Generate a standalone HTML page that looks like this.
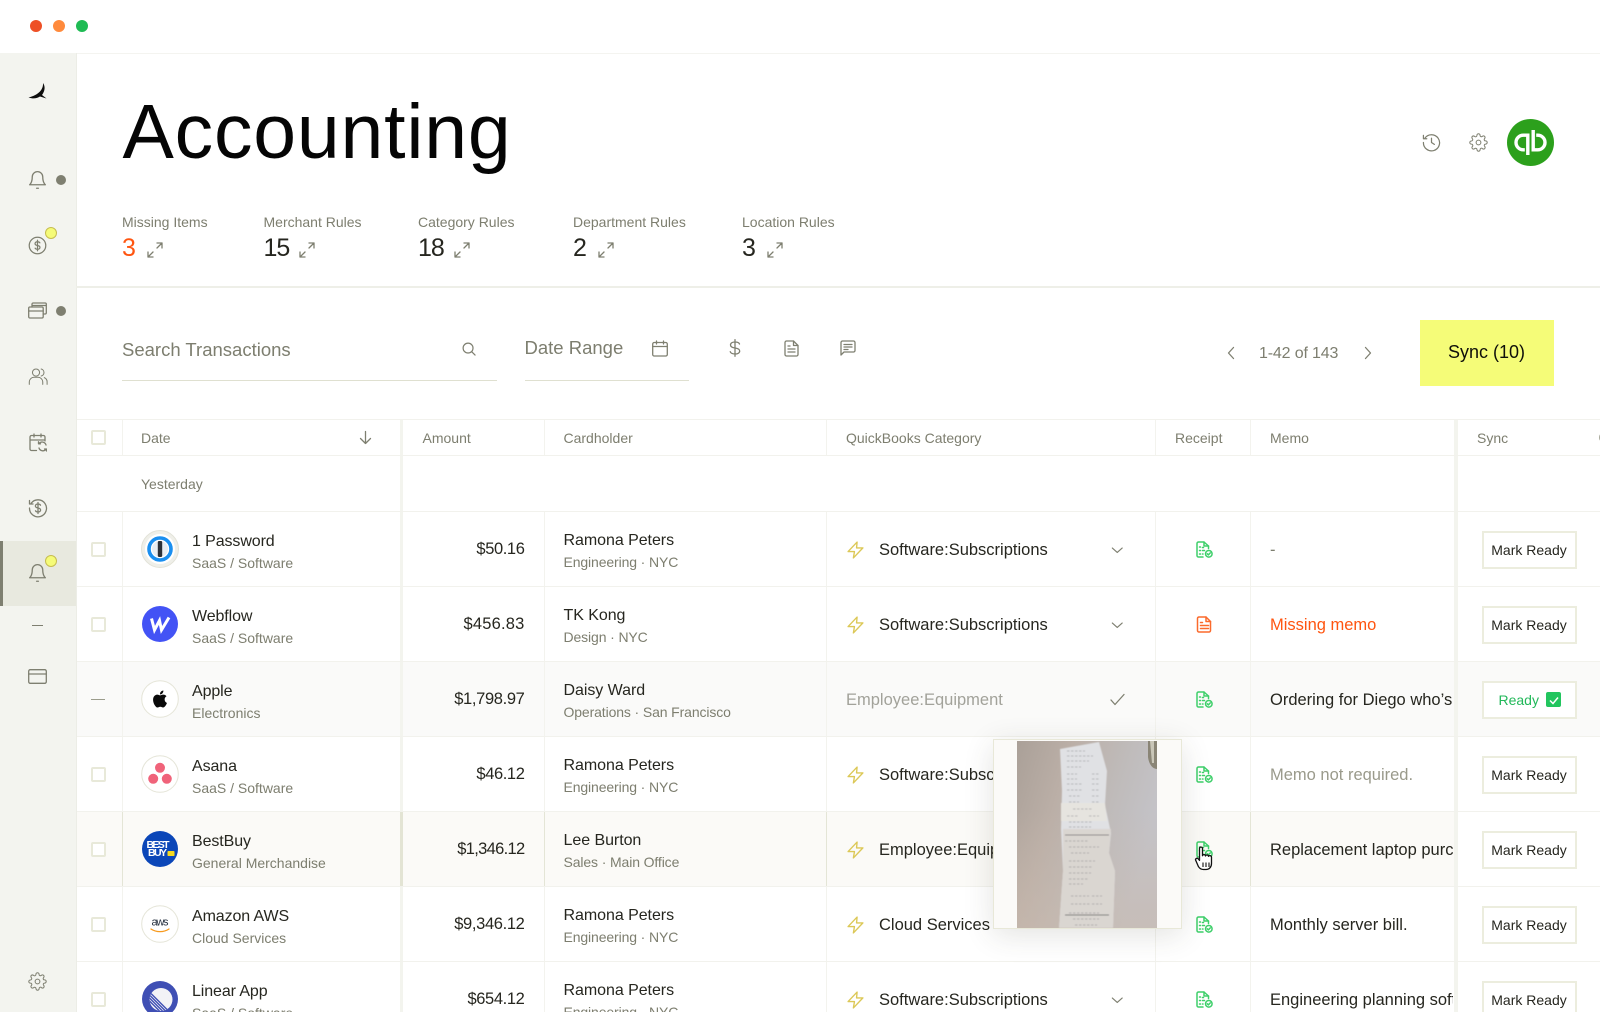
<!DOCTYPE html>
<html lang="en"><head><meta charset="utf-8"><title>Accounting</title>
<style>
*{box-sizing:border-box;margin:0;padding:0}
html,body{width:1600px;height:1014px;background:#fff;overflow:hidden}
body{font-family:"Liberation Sans",sans-serif;color:#26261f;position:relative}
.abs,#app div,#app span,#app svg{position:absolute}
#app{position:absolute;left:0;top:0;width:1600px;height:1012px;overflow:hidden;background:#fff}
.t{white-space:nowrap}
.ic{fill:none;stroke:#7e7f70;stroke-width:1.3;stroke-linecap:round;stroke-linejoin:round}
.dot{width:10px;height:10px;border-radius:50%;background:#7e7f70}
.yd{width:12px;height:12px;border-radius:50%;background:#f5fb78;border:1.2px solid #c6bd50}
.lb{font-size:14px;line-height:20px;color:#7d7e6f;white-space:nowrap}
.vl{font-size:25px;line-height:30px;letter-spacing:-1px;color:#26261f;white-space:nowrap}
.h{left:76px;width:1524px;height:1px;background:#f2f2ed}
.v{width:1px;top:420px;height:592px;background:#f3f3ee}
.th{top:428px;font-size:14px;line-height:20px;color:#7d7e6f;white-space:nowrap}
.r{left:0;width:1600px;height:75px}
.ck{left:91px;top:30px;width:15px;height:15px;border:2px solid #e8e9d9;border-radius:2px;background:#fff}
.lg{left:141px;top:18px;width:38px;height:38px}
.n{left:192px;top:20px;font-size:16px;line-height:20px;letter-spacing:-.1px;white-space:nowrap}
.s{left:192px;top:41px;font-size:14px;line-height:20px;color:#7d7e6f;white-space:nowrap}
.a{left:400px;width:124.5px;top:27px;font-size:16.5px;line-height:20px;text-align:right;white-space:nowrap}
.cn{left:563.5px;top:19px;font-size:16px;line-height:20px;letter-spacing:-.05px;white-space:nowrap}
.cs{left:563.5px;top:40px;font-size:14px;line-height:20px;color:#7d7e6f;letter-spacing:-.12px;white-space:nowrap}
.b{left:847px;top:29px;width:17px;height:18px;fill:none;stroke:#dcc857;stroke-width:1.3;stroke-linejoin:round}
.c{left:879px;top:28px;font-size:16.5px;line-height:20px;white-space:nowrap}
.ch{left:1111px;top:31.5px;width:12.5px;height:12.5px;fill:none;stroke:#7e7f70;stroke-width:1.3;stroke-linecap:round;stroke-linejoin:round}
.d{left:1196px;top:28.5px;width:17px;height:17px;fill:none;stroke:#3ecf6a;stroke-width:1.5;stroke-linecap:round;stroke-linejoin:round}
.m{left:1270px;top:28px;width:183px;overflow:hidden;font-size:16.5px;line-height:20px;white-space:nowrap}
.btn{left:1481.5px;top:19px;width:95px;height:38px;border:2px solid #ecedde;background:#fff;font-size:14px;line-height:35px;text-align:center;white-space:nowrap;color:#26261f}
</style></head><body>
<svg width="0" height="0" style="position:absolute">
<defs>
<symbol id="exp" viewBox="0 0 16 16"><path d="M10 6 15 1M10 1h5v5M6 10l-5 5M1 10v5h5"/></symbol>
<symbol id="bell" viewBox="0 0 24 24"><path d="M18 9a6 6 0 0 0-12 0c0 7-3 9-3 9h18s-3-2-3-9"/><path d="M11 22h2"/></symbol>
<symbol id="gear" viewBox="0 0 24 24"><circle cx="12" cy="12" r="3"/><path d="M19.4 15a1.65 1.65 0 0 0 .33 1.82l.06.06a2 2 0 0 1 0 2.83 2 2 0 0 1-2.83 0l-.06-.06a1.65 1.65 0 0 0-1.82-.33 1.65 1.65 0 0 0-1 1.51V21a2 2 0 0 1-2 2 2 2 0 0 1-2-2v-.09A1.65 1.65 0 0 0 9 19.4a1.65 1.65 0 0 0-1.82.33l-.06.06a2 2 0 0 1-2.83 0 2 2 0 0 1 0-2.83l.06-.06a1.65 1.65 0 0 0 .33-1.82 1.65 1.65 0 0 0-1.51-1H3a2 2 0 0 1-2-2 2 2 0 0 1 2-2h.09A1.65 1.65 0 0 0 4.6 9a1.65 1.65 0 0 0-.33-1.82l-.06-.06a2 2 0 0 1 0-2.83 2 2 0 0 1 2.83 0l.06.06a1.65 1.65 0 0 0 1.82.33H9a1.65 1.65 0 0 0 1-1.51V3a2 2 0 0 1 2-2 2 2 0 0 1 2 2v.09a1.65 1.65 0 0 0 1 1.51 1.65 1.65 0 0 0 1.82-.33l.06-.06a2 2 0 0 1 2.83 0 2 2 0 0 1 0 2.83l-.06.06a1.65 1.65 0 0 0-.33 1.82V9a1.65 1.65 0 0 0 1.51 1H21a2 2 0 0 1 2 2 2 2 0 0 1-2 2h-.09a1.65 1.65 0 0 0-1.51 1z"/></symbol>
<symbol id="bolt" viewBox="0 0 16 17"><path d="M9.500 1 1 10h6l-1 6 9-9.500H9z"/></symbol>
<symbol id="dn" viewBox="0 0 14 14"><path d="M1.500 4.500 7 9.500l5.500-5"/></symbol>
<symbol id="rc" viewBox="0 0 17 17"><path d="M7 16H2.500A1.500 1.500 0 0 1 1 14.500v-12A1.500 1.500 0 0 1 2.500 1H8l4.500 4v2.500"/><path d="M8 1v4h4.500"/><path d="M3.500 6h1M3.500 9.500h1M3.500 13h1M6.500 6.500h1M6.500 9.500h2M6.500 13h.5"/><circle cx="12.800" cy="12.800" r="3.300"/><path d="M11.300 12.800l1.100 1.100 1.900-2"/></symbol>
</defs></svg>
<div id="app">
<!-- titlebar -->
<div style="left:30px;top:20px;width:12px;height:12px;border-radius:50%;background:#ee5026"></div>
<div style="left:53px;top:20px;width:12px;height:12px;border-radius:50%;background:#ff8a3c"></div>
<div style="left:76px;top:20px;width:12px;height:12px;border-radius:50%;background:#1fbb54"></div>
<div style="left:0;top:52.500px;width:1600px;height:1px;background:#f4f4f0"></div>

<!-- table backgrounds -->
<div style="left:76px;top:662px;width:1524px;height:75px;background:#fafaf9"></div>
<div style="left:76px;top:812px;width:1378px;height:75px;background:#fbfaf7"></div>
<div class="v" style="left:122px"></div><div class="v" style="left:544px"></div><div class="v" style="left:826px"></div><div class="v" style="left:1155px"></div><div class="v" style="left:1250px"></div>
<div style="left:76px;top:456px;width:1524px;height:55px;background:#fff"></div>
<div style="left:399.500px;top:420px;width:3.500px;height:592px;background:#f3f4ee"></div>
<div style="left:1454px;top:420px;width:4px;height:592px;background:#f3f4ee"></div>
<div style="left:122px;top:812px;width:1px;height:75px;background:#e4e5d6"></div>
<div style="left:399.500px;top:812px;width:3.500px;height:75px;background:#e3e4d4"></div>
<div style="left:544px;top:812px;width:1px;height:75px;background:#e4e5d6"></div>
<div style="left:826px;top:812px;width:1px;height:75px;background:#e4e5d6"></div>
<div style="left:1250px;top:812px;width:1px;height:75px;background:#e4e5d6"></div>
<div class="h" style="top:419px"></div><div class="h" style="top:455px"></div><div class="h" style="top:511px"></div><div class="h" style="top:586px"></div><div class="h" style="top:661px"></div><div class="h" style="top:736px"></div><div class="h" style="top:811px"></div><div class="h" style="top:886px"></div><div class="h" style="top:961px"></div>

<!-- sidebar -->
<div style="left:0;top:53px;width:77px;height:960px;background:#f3f4ef;border-right:1.500px solid #ecede6"></div>
<svg style="left:28px;top:82px" width="20" height="18" viewBox="0 0 20 18"><path fill="#0d0d0d" d="M15 1C15.500 7 11 13 .5 15.500 5 17 9 16.500 12 14.500L18.500 16.500 14 13C17 9 17.500 4.500 15 1Z"/></svg>
<svg class="ic" style="left:27px;top:168.500px;stroke-width:1.500" width="21" height="21"><use href="#bell"/></svg>
<div class="dot" style="left:56px;top:175px"></div>
<svg class="ic" style="left:28px;top:236px" width="19" height="19" viewBox="0 0 20 20"><circle cx="10" cy="10" r="8.700"/><path d="M12.500 7.200C12.200 6.500 11.200 6 10 6c-1.500 0-2.600.8-2.600 2s1.100 1.700 2.600 2 2.600.8 2.600 2-1.100 2-2.600 2c-1.200 0-2.200-.5-2.500-1.200M10 4.500v11"/></svg>
<div class="yd" style="left:44.500px;top:226.500px"></div>
<svg class="ic" style="left:28px;top:302px" width="19" height="17" viewBox="0 0 19 17"><rect x=".7" y="5" width="14.500" height="11" rx="1.200"/><path d="M.7 9h14.500M4 5V2.200C4 1.500 4.500 1 5.200 1h12c.7 0 1.100.5 1.100 1.200v8.600c0 .7-.4 1.200-1.100 1.200h-2M4 3.500h14"/></svg>
<div class="dot" style="left:56px;top:306px"></div>
<svg class="ic" style="left:27.500px;top:367px" width="20" height="19" viewBox="0 0 24 24"><circle cx="9.500" cy="7" r="4.500"/><path d="M1 22v-3a6 6 0 0 1 6-6h5a6 6 0 0 1 6 6v3M16 2.600a4.500 4.500 0 0 1 0 8.800M20 13.400a6 6 0 0 1 3.500 5.600v3"/></svg>
<svg class="ic" style="left:28.500px;top:433px" width="18" height="19" viewBox="0 0 18 19"><path d="M7.500 17.500H2.500A1.500 1.500 0 0 1 1 16V4a1.500 1.500 0 0 1 1.500-1.500h12A1.500 1.500 0 0 1 16 4v4M1 7h15M5 1v3M12 1v3"/><path d="M17 12a4 4 0 0 0-7-1.500M9.500 8.800v2h2M10 15a4 4 0 0 0 7 1.200M17.500 18v-2h-2"/></svg>
<svg class="ic" style="left:28px;top:498px" width="20" height="20" viewBox="0 0 20 20"><path d="M3.200 5.200A8.500 8.500 0 1 1 1.500 10M1.500 2.500v3.500H5"/><path d="M12.500 7.200c-.3-.7-1.300-1.200-2.500-1.200-1.500 0-2.600.8-2.600 2s1.100 1.700 2.600 2 2.600.8 2.600 2-1.100 2-2.600 2c-1.200 0-2.200-.5-2.500-1.200M10 4.500v11"/></svg>
<div style="left:0;top:541px;width:76px;height:65px;background:#e8e9df"></div>
<div style="left:0;top:541px;width:2.500px;height:65px;background:#7e7f70"></div>
<svg class="ic" style="left:27px;top:561.500px;stroke-width:1.500" width="21" height="21"><use href="#bell"/></svg>
<div class="yd" style="left:44.500px;top:554.500px"></div>
<div style="left:32px;top:624.500px;width:11px;height:1.300px;background:#7e7f70"></div>
<svg class="ic" style="left:28px;top:669px" width="19" height="15" viewBox="0 0 19 15"><rect x=".7" y=".7" width="17.600" height="13.600" rx="1.500"/><path d="M.7 5h17.600"/></svg>
<svg class="ic" style="left:28px;top:972px" width="19" height="19"><use href="#gear"/></svg>

<!-- header -->
<div class="t" style="left:122.500px;top:86px;font-size:77px;line-height:92px;letter-spacing:.8px;color:#050505">Accounting</div>
<svg class="ic" style="left:1422px;top:133px" width="19" height="19" viewBox="0 0 20 20"><path d="M3.200 5.200A8.500 8.500 0 1 1 1.500 10M1.500 2.500v3.500H5M10 5.500V10l3 2"/></svg>
<svg class="ic" style="left:1469px;top:133px" width="19" height="19"><use href="#gear"/></svg>
<svg style="left:1506.500px;top:119px" width="47" height="47" viewBox="0 0 47 47"><circle cx="23.500" cy="23.500" r="23.500" fill="#2ca01c"/><path fill="none" stroke="#fff" stroke-width="3.400" d="M20.800 16.200h-4.500a7.300 7.300 0 0 0 0 14.600h1.500M20.800 14.500V36M26.200 11V32.500M26.200 30.800h4.500a7.300 7.300 0 0 0 0-14.600h-1.500"/></svg>

<div class="lb" style="left:122px;top:212px">Missing Items</div>
<div class="vl" style="left:122px;top:233px;color:#ff5510">3</div>
<svg class="ic" style="left:147px;top:242px" width="16" height="16"><use href="#exp"/></svg>
<div class="lb" style="left:263.500px;top:212px">Merchant Rules</div>
<div class="vl" style="left:263.500px;top:233px">15</div>
<svg class="ic" style="left:299px;top:242px" width="16" height="16"><use href="#exp"/></svg>
<div class="lb" style="left:418px;top:212px">Category Rules</div>
<div class="vl" style="left:418px;top:233px">18</div>
<svg class="ic" style="left:454px;top:242px" width="16" height="16"><use href="#exp"/></svg>
<div class="lb" style="left:573px;top:212px">Department Rules</div>
<div class="vl" style="left:573px;top:233px">2</div>
<svg class="ic" style="left:598px;top:242px" width="16" height="16"><use href="#exp"/></svg>
<div class="lb" style="left:742px;top:212px">Location Rules</div>
<div class="vl" style="left:742px;top:233px">3</div>
<svg class="ic" style="left:767px;top:242px" width="16" height="16"><use href="#exp"/></svg>
<div style="left:76px;top:286px;width:1524px;height:1.500px;background:#eeefe8"></div>

<!-- toolbar -->
<div class="t" style="left:122px;top:338px;font-size:18.500px;line-height:24px;color:#7d7e6f">Search Transactions</div>
<svg class="ic" style="left:462px;top:341.500px" width="14" height="14" viewBox="0 0 15 15"><circle cx="6.500" cy="6.500" r="5.300"/><path d="m10.500 10.500 3.500 3.500"/></svg>
<div style="left:122px;top:380px;width:375px;height:1.300px;background:#dfe0d0"></div>
<div class="t" style="left:524.500px;top:336px;font-size:18.500px;line-height:24px;color:#7d7e6f">Date Range</div>
<svg class="ic" style="left:652px;top:339.500px" width="16" height="17" viewBox="0 0 16 17"><rect x=".7" y="2.500" width="14.600" height="13.500" rx="1.500"/><path d="M.7 6.500h14.600M4.500 1v3M11.500 1v3"/></svg>
<div style="left:524.500px;top:380px;width:164px;height:1.300px;background:#dfe0d0"></div>
<svg class="ic" style="left:729px;top:339px" width="12" height="18" viewBox="0 0 12 18"><path d="M10.500 5C10 3.500 8.200 3 6 3 3.300 3 1.500 4.200 1.500 6S3.300 8.600 6 9s4.700 1.200 4.700 3-1.800 3-4.700 3c-2.400 0-4.200-.7-4.800-2.300M6 .7v16.600"/></svg>
<svg class="ic" style="left:784px;top:340px" width="15" height="17" viewBox="0 0 15 17"><path d="M9.500 1H2.500A1.500 1.500 0 0 0 1 2.500v12A1.500 1.500 0 0 0 2.500 16h10a1.500 1.500 0 0 0 1.500-1.500V5.500z"/><path d="M9.500 1v4.500H14M4 6h2M4 9h7M4 12h7"/></svg>
<svg class="ic" style="left:839.500px;top:340px" width="16" height="16" viewBox="0 0 16 16"><path d="M1 15V2.500A1.500 1.500 0 0 1 2.500 1h11A1.500 1.500 0 0 1 15 2.500v8a1.500 1.500 0 0 1-1.500 1.500H4z"/><path d="M4 4.500h8M4 7h8M4 9.500h4"/></svg>
<svg class="ic" style="left:1226px;top:346px" width="10" height="14" viewBox="0 0 10 14"><path d="M7.500 1.500 2.500 7l5 5.500"/></svg>
<div class="t" style="left:1259px;top:344px;font-size:16px;line-height:20px;letter-spacing:-.15px;color:#7d7e6f">1-42 of 143</div>
<svg class="ic" style="left:1362.500px;top:346px" width="10" height="14" viewBox="0 0 10 14"><path d="M2.500 1.500 7.500 7l-5 5.500"/></svg>
<div style="left:1419.500px;top:320px;width:134px;height:66px;background:#f5fc78;font-size:18px;line-height:64px;text-align:center;color:#0f0f0a">Sync (10)</div>

<!-- table head -->
<div class="ck" style="top:430px"></div>
<div class="th" style="left:141px">Date</div>
<svg class="ic" style="left:358px;top:430px" width="15" height="15" viewBox="0 0 15 15"><path d="M7.500 1.500v12M2.500 8.500l5 5 5-5"/></svg>
<div class="th" style="left:422.500px">Amount</div>
<div class="th" style="left:563.500px">Cardholder</div>
<div class="th" style="left:846px">QuickBooks Category</div>
<div class="th" style="left:1175px">Receipt</div>
<div class="th" style="left:1270px">Memo</div>
<div class="th" style="left:1477px">Sync</div>
<div style="left:1598.500px;top:434px;width:4px;height:7px;border:1px solid #a9aa9c;border-radius:50%"></div>
<div class="t" style="left:141px;top:474px;font-size:14px;line-height:20px;color:#7d7e6f">Yesterday</div>

<!-- row 1 -->
<div class="r" style="top:512px">
<div class="ck"></div>
<svg class="lg" viewBox="0 0 38 38"><circle cx="19" cy="19" r="18.500" fill="#efefe9" stroke="#e2e2d8"/><circle cx="19" cy="19" r="15" fill="#fff"/><circle cx="19" cy="19" r="11" fill="#fff" stroke="#1a8ff0" stroke-width="3.600"/><circle cx="19" cy="19" r="8" fill="#e8edf2"/><rect x="16.800" y="11" width="4.400" height="16" rx="1.200" fill="#2c3138"/></svg>
<div class="n">1 Password</div><div class="s">SaaS / Software</div>
<div class="a" style="letter-spacing:-.4px">$50.16</div>
<div class="cn">Ramona Peters</div><div class="cs">Engineering · NYC</div>
<svg class="b"><use href="#bolt"/></svg><div class="c">Software:Subscriptions</div>
<svg class="ch"><use href="#dn"/></svg>
<svg class="d"><use href="#rc"/></svg>
<div class="m" style="color:#7d7e6f">-</div>
<div class="btn">Mark Ready</div>
</div>
<!-- row 2 -->
<div class="r" style="top:587px">
<div class="ck"></div>
<svg class="lg" viewBox="0 0 38 38"><circle cx="19" cy="19" r="18" fill="#4353f5"/><path d="M10.500 13.500 13.500 25 18.500 15.500 20.500 25 28 12.500" fill="none" stroke="#fff" stroke-width="3" stroke-linejoin="miter"/></svg>
<div class="n">Webflow</div><div class="s">SaaS / Software</div>
<div class="a" style="letter-spacing:.2px">$456.83</div>
<div class="cn">TK Kong</div><div class="cs">Design · NYC</div>
<svg class="b"><use href="#bolt"/></svg><div class="c">Software:Subscriptions</div>
<svg class="ch"><use href="#dn"/></svg>
<svg class="d" style="stroke:#fb6a2c" viewBox="0 0 17 17"><path d="M10 1H3A1.500 1.500 0 0 0 1.500 2.500v12A1.500 1.500 0 0 0 3 16h10a1.500 1.500 0 0 0 1.500-1.500V5.500z"/><path d="M10 1v4.500h4.500M4.500 6.500h2M4.500 9.500h8M4.500 12.500h8"/></svg>
<div class="m" style="color:#ff5510">Missing memo</div>
<div class="btn">Mark Ready</div>
</div>
<!-- row 3 -->
<div class="r" style="top:662px">
<div style="left:91px;top:37px;width:14px;height:1.300px;background:#9b9c8c"></div>
<svg class="lg" viewBox="0 0 38 38"><circle cx="19" cy="19" r="18.300" fill="#fff" stroke="#e5e5d8"/><svg x="10.500" y="9.500" width="17" height="19" viewBox="0 0 24 24"><path fill="#0a0a0a" d="M12.152 6.896c-.948 0-2.415-1.078-3.960-1.040-2.040.027-3.910 1.183-4.961 3.014-2.117 3.675-.546 9.103 1.519 12.090 1.013 1.454 2.208 3.090 3.792 3.039 1.520-.065 2.090-.987 3.935-.987 1.831 0 2.350.987 3.960.948 1.637-.026 2.676-1.480 3.676-2.948 1.156-1.688 1.636-3.325 1.662-3.415-.039-.013-3.182-1.221-3.220-4.857-.026-3.040 2.480-4.494 2.597-4.559-1.429-2.090-3.623-2.324-4.390-2.376-2-.156-3.675 1.090-4.610 1.090zM15.530 3.830c.843-1.012 1.400-2.427 1.245-3.830-1.207.052-2.662.805-3.532 1.818-.78.896-1.454 2.338-1.273 3.714 1.338.104 2.715-.688 3.559-1.701"/></svg></svg>
<div class="n">Apple</div><div class="s">Electronics</div>
<div class="a" style="letter-spacing:-.35px">$1,798.97</div>
<div class="cn">Daisy Ward</div><div class="cs">Operations · San Francisco</div>
<div class="c" style="left:846px;color:#a2a29a">Employee:Equipment</div>
<svg class="ch" style="left:1110px;top:30px;width:15px;height:15px" viewBox="0 0 15 15"><path d="M1 8l4 4.500L14 2.500"/></svg>
<svg class="d"><use href="#rc"/></svg>
<div class="m">Ordering for Diego who’s out of office</div>
<div class="btn" style="color:#22b85a"><span style="left:15px;top:0">Ready</span><span style="left:62px;top:8.500px;width:15.500px;height:15.500px;border-radius:2px;background:#22c55e"></span><svg style="left:64px;top:10.500px" width="12" height="12" viewBox="0 0 12 12"><path d="M2 6.500l3 3 5-6" fill="none" stroke="#fff" stroke-width="1.500"/></svg></div>
</div>
<!-- row 4 -->
<div class="r" style="top:737px">
<div class="ck"></div>
<svg class="lg" viewBox="0 0 38 38"><circle cx="19" cy="19" r="18.300" fill="#fff" stroke="#e5e5d8"/><circle cx="19" cy="12.800" r="5" fill="#f0637a"/><circle cx="12.200" cy="23.800" r="5" fill="#f0637a"/><circle cx="25.800" cy="23.800" r="5" fill="#f0637a"/></svg>
<div class="n">Asana</div><div class="s">SaaS / Software</div>
<div class="a" style="letter-spacing:-.4px">$46.12</div>
<div class="cn">Ramona Peters</div><div class="cs">Engineering · NYC</div>
<svg class="b"><use href="#bolt"/></svg><div class="c">Software:Subscriptions</div>
<svg class="d"><use href="#rc"/></svg>
<div class="m" style="color:#9a9a8b">Memo not required.</div>
<div class="btn">Mark Ready</div>
</div>
<!-- row 5 -->
<div class="r" style="top:812px">
<div class="ck"></div>
<svg class="lg" viewBox="0 0 38 38"><circle cx="19" cy="19" r="18" fill="#0b46b8"/><text x="5.500" y="18" font-family="Liberation Sans" font-weight="700" font-size="10.500" fill="#fff" textLength="23">BEST</text><text x="7" y="26" font-family="Liberation Sans" font-weight="700" font-size="10.500" fill="#fff" textLength="19">BUY</text><rect x="26.500" y="21" width="7" height="5" rx=".8" fill="#f5d920"/></svg>
<div class="n">BestBuy</div><div class="s">General Merchandise</div>
<div class="a" style="letter-spacing:-.68px">$1,346.12</div>
<div class="cn">Lee Burton</div><div class="cs">Sales · Main Office</div>
<svg class="b"><use href="#bolt"/></svg><div class="c">Employee:Equipment</div>
<svg class="d"><use href="#rc"/></svg>
<div class="m">Replacement laptop purchase</div>
<div class="btn">Mark Ready</div>
</div>
<!-- row 6 -->
<div class="r" style="top:887px">
<div class="ck"></div>
<svg class="lg" viewBox="0 0 38 38"><circle cx="19" cy="19" r="18.300" fill="#fff" stroke="#e5e5d8"/><text x="19" y="20.500" text-anchor="middle" font-family="Liberation Sans" font-size="11" fill="#252f3e" textLength="17">aws</text><path d="M10 24c5 3.500 13 3.500 18 0" fill="none" stroke="#f79a1e" stroke-width="1.300" stroke-linecap="round"/></svg>
<div class="n">Amazon AWS</div><div class="s">Cloud Services</div>
<div class="a" style="letter-spacing:-.35px">$9,346.12</div>
<div class="cn">Ramona Peters</div><div class="cs">Engineering · NYC</div>
<svg class="b"><use href="#bolt"/></svg><div class="c">Cloud Services</div>
<svg class="d"><use href="#rc"/></svg>
<div class="m">Monthly server bill.</div>
<div class="btn">Mark Ready</div>
</div>
<!-- row 7 -->
<div class="r" style="top:962px">
<div class="ck"></div>
<svg class="lg" viewBox="0 0 38 38"><defs><clipPath id="lc"><circle cx="20" cy="19.500" r="11.500"/></clipPath></defs><circle cx="19" cy="19" r="18" fill="#3f4fb4"/><circle cx="20" cy="19.500" r="11.500" fill="#f2f2f6"/><g clip-path="url(#lc)" stroke="#3f4fb4" stroke-width="1.400"><path d="M4 7.500 30 33.500M4 10.500 30 36.500M4 13.500 30 39.500M4 16.500 30 42.500"/></g></svg>
<div class="n">Linear App</div><div class="s">SaaS / Software</div>
<div class="a" style="letter-spacing:-.37px">$654.12</div>
<div class="cn">Ramona Peters</div><div class="cs">Engineering · NYC</div>
<svg class="b"><use href="#bolt"/></svg><div class="c">Software:Subscriptions</div>
<svg class="ch"><use href="#dn"/></svg>
<svg class="d"><use href="#rc"/></svg>
<div class="m">Engineering planning software</div>
<div class="btn">Mark Ready</div>
</div>

<!-- popover -->
<div style="left:992.500px;top:739px;width:189px;height:189.500px;background:#fbfaf8;border:1.500px solid #e8e8d8;box-shadow:0 6px 28px rgba(60,60,40,.14)"></div>
<svg style="left:1017px;top:740.500px" width="140" height="187" viewBox="0 0 140 187">
<defs><linearGradient id="pg" x1="0" y1="0" x2="1" y2=".4"><stop offset="0" stop-color="#aaa098"/><stop offset=".35" stop-color="#bbafa7"/><stop offset=".7" stop-color="#bfbbba"/><stop offset="1" stop-color="#c4c3c8"/></linearGradient>
<linearGradient id="pb" x1="0" y1="0" x2="0" y2="1"><stop offset="0" stop-color="#c7b8ac" stop-opacity="0"/><stop offset="1" stop-color="#c9baae" stop-opacity=".6"/></linearGradient>
<filter id="bl"><feGaussianBlur stdDeviation=".5"/></filter></defs>
<rect width="140" height="187" fill="url(#pg)"/>
<rect x="0" y="70" width="140" height="117" fill="url(#pb)"/>
<path d="M131 0h9v28c-4 0-8-4-9-12z" fill="#8a8576"/>
<path d="M133 0h4v22h-2z" fill="#c9c6b8"/>
<g filter="url(#bl)">
<path d="M43 8 82 1 90 30 88 64 94 92 92 112 98 130 96 187H42L46 130 44 88 45 50z" fill="#e0e1e4"/>
<path d="M46 88H94L92 112 98 130 96 187H42L46 130z" fill="#dad6d1"/>
<path d="M44 62 88 62 90 80H44z" fill="#e6e4df"/>
<g stroke="#77777b" stroke-width=".8" stroke-dasharray="2.500 1.500" opacity=".55">
<path d="M50 10h18M50 15h26M50 20h22M50 26h14M50 33h10M75 33h8M50 38h10M75 38h8M50 43h15M75 43h8M50 49h15M75 49h8M52 55h12M75 55h8M52 61h10M75 61h8M56 68h20M50 75h12M72 75h10M52 81h24M52 86h22"/>
<path d="M48 100h24M52 106h30M54 112h18M52 120h26M52 126h24M52 132h22M52 138h20M52 143h14M54 155h18M75 155h10M54 163h20M75 163h10M52 172h30M56 178h26M58 184h22"/>
</g>
<path d="M48 174h44" stroke="#555" stroke-width=".7"/>
<path d="M48 94h44" stroke="#6a6a6a" stroke-width=".7"/>
</g>
</svg>

<!-- cursor -->
<svg style="left:1194px;top:846px;z-index:5" width="22" height="26" viewBox="0 0 22 26"><path d="M5.500 2.500c0-1.800 3-1.800 3 0v7.200c.3-1.500 3-1.500 3 .3.300-1.400 3-1.400 3 .4.500-1.200 3-1 3 .8v6.300c0 3.500-2.200 6-5.500 6h-2.500c-2.300 0-3.800-1-5-2.800L1.800 14.500c-1-1.700 1.200-3 2.400-1.700l1.300 1.600z" fill="#fff" stroke="#111" stroke-width="1.300" stroke-linejoin="round"/><path d="M9 16.500v4.500M12 16.500v4.500M15 16.500v4.500" stroke="#111" stroke-width="1.100"/></svg>
</div>
</body></html>
